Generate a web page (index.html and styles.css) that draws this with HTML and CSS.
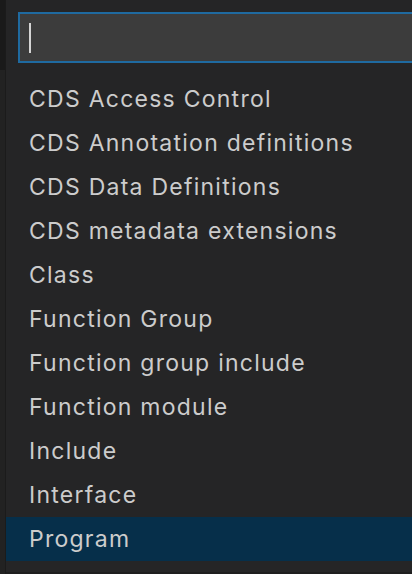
FILE: index.html
```html
<!DOCTYPE html>
<html>
<head>
<meta charset="utf-8">
<link rel="stylesheet" href="styles.css">
</head>
<body>
<div class="frame">
  <div class="edge"></div>
  <div class="panel">
    <div class="search">
      <div class="input"><span class="caret"></span></div>
    </div>
    <ul class="list">
      <li class="item">CDS Access Control</li>
      <li class="item">CDS Annotation definitions</li>
      <li class="item">CDS Data Definitions</li>
      <li class="item">CDS metadata extensions</li>
      <li class="item">Class</li>
      <li class="item">Function Group</li>
      <li class="item">Function group include</li>
      <li class="item">Function module</li>
      <li class="item">Include</li>
      <li class="item">Interface</li>
      <li class="item selected">Program</li>
    </ul>
  </div>
</div>
</body>
</html>
```
FILE: styles.css
```css
html, body {
  margin: 0;
  padding: 0;
  background: #1e1e1e;
  width: 412px;
  height: 574px;
  overflow: hidden;
}
.frame {
  display: flex;
  height: 574px;
}
.edge {
  width: 5px;
  flex: none;
  background: linear-gradient(to bottom, #1a1a1a 0, #1a1a1a 70px, #222222 70px, #222222 100%);
  border-right: 1px solid #1b1b1b;
}
.panel {
  flex: 1;
  background: #252526;
  display: flex;
  flex-direction: column;
  height: 572px;
  font-family: Inter, "Open Sans", sans-serif;
}
.search {
  padding: 12px 0 0 12px;
  height: 52px;
  flex: none;
}
.input {
  height: 47px;
  background: #3c3c3c;
  border: 2px solid #1f6aa0;
  border-right: none;
  display: flex;
  align-items: center;
  padding-left: 9px;
}
.caret {
  width: 2px;
  height: 30px;
  background: #d4d4d4;
}
.list {
  list-style: none;
  margin: 0;
  padding: 0;
  margin-top: 13px;
}
.item {
  height: 44px;
  line-height: 44px;
  padding-left: 23px;
  color: #cccccc;
  font-size: 23px;
  letter-spacing: 1.25px;
  white-space: nowrap;
}
.item.selected {
  background: #062f4a;
}
```
